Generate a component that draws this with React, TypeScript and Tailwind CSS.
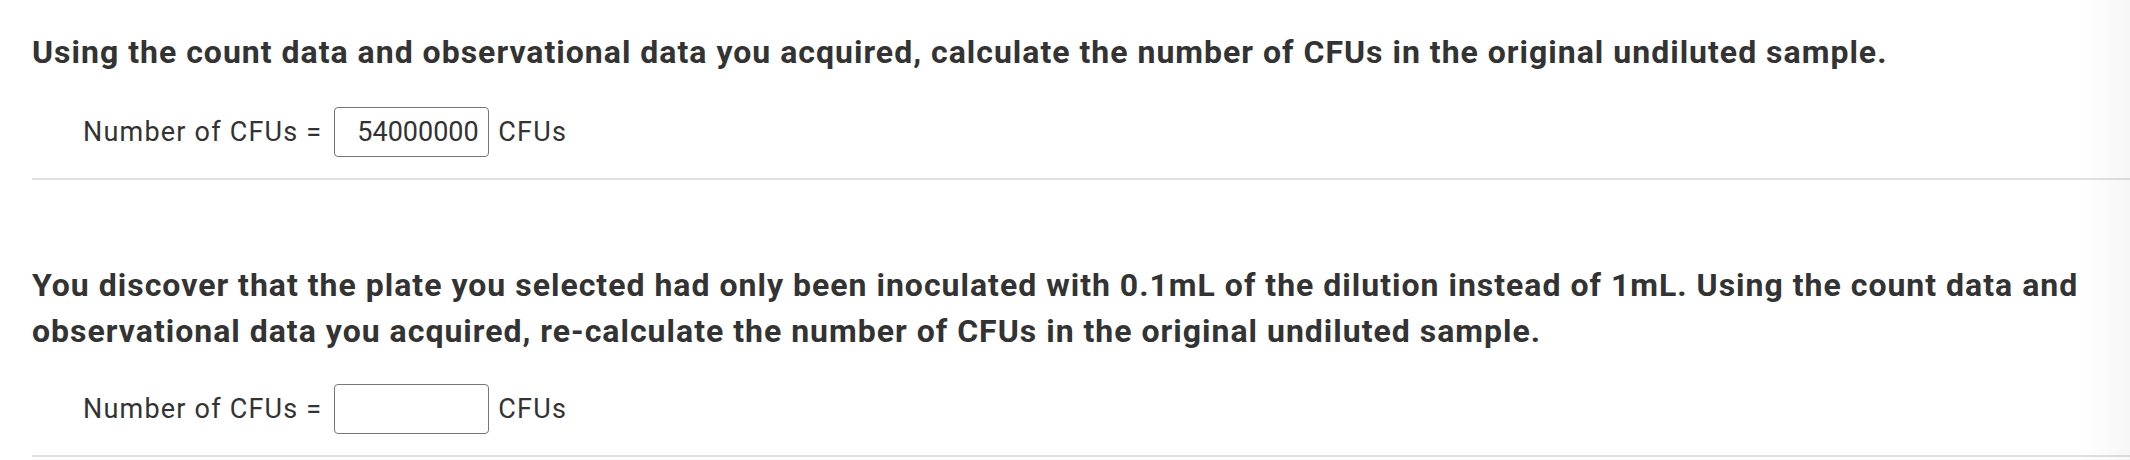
import React, { useState } from "react";

const CfuRow: React.FC<{ value: string; onChange: (v: string) => void }> = ({ value, onChange }) => {
  return (
    <div className="flex items-center pl-[51px]">
      <span className="text-[27px] tracking-[1.2px] text-[#333333] mr-[12px]">Number of CFUs =</span>
      <input
        value={value}
        onChange={(e) => onChange(e.target.value)}
        className="w-[155px] h-[50px] border border-[#767676] rounded-[4px] pl-[22px] pr-[10px] text-[27px] tracking-normal text-[#333333] outline-none"
      />
      <span className="text-[27px] tracking-[1.2px] text-[#333333] ml-[9px]">CFUs</span>
    </div>
  );
};

const App: React.FC = () => {
  const [first, setFirst] = useState("54000000");
  const [second, setSecond] = useState("");

  return (
    <div className="relative w-full h-[460px] bg-white font-[Roboto,'Liberation_Sans',sans-serif] overflow-hidden">
      <div className="pl-[32px] pt-[29px]">
        <h2 className="text-[32px] leading-[46px] tracking-[1px] font-bold text-[#333333]">
          Using the count data and observational data you acquired, calculate the number of CFUs in the original undiluted sample.
        </h2>
        <div className="mt-[32px]">
          <CfuRow value={first} onChange={setFirst} />
        </div>
        <div className="mt-[21px] h-[2px] bg-[#e0e0e0]" />

        <h2 className="mt-[82px] text-[32px] leading-[46px] tracking-[1px] font-bold text-[#333333] pr-[40px]">
          You discover that the plate you selected had only been inoculated with 0.1mL of the dilution instead of 1mL. Using the count data and observational data you acquired, re-calculate the number of CFUs in the original undiluted sample.
        </h2>
        <div className="mt-[30px]">
          <CfuRow value={second} onChange={setSecond} />
        </div>
        <div className="mt-[21px] h-[2px] bg-[#e0e0e0]" />
      </div>
      {/* faint shadow at the right edge */}
      <div className="pointer-events-none absolute top-0 right-0 h-full w-[50px] bg-gradient-to-r from-transparent to-[#00000008]" />
    </div>
  );
};

export default App;
